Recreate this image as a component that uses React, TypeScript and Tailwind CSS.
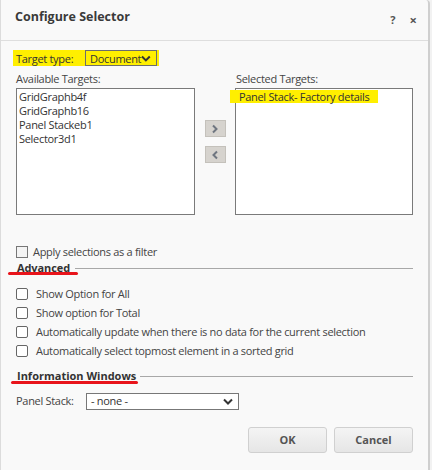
import React from "react";

const font = { fontFamily: '"Open Sans", "Noto Sans", sans-serif' };

function Chevron() {
  return (
    <svg width="10" height="7" viewBox="0 0 10 7">
      <path d="M1 1.5 L5 5.5 L9 1.5" fill="none" stroke="#333" strokeWidth="2" />
    </svg>
  );
}

function Check({ rounded }: { rounded?: boolean }) {
  return (
    <span
      className={
        rounded
          ? "block w-[12px] h-[12px] border border-[#666] rounded-[2px] bg-white shrink-0"
          : "block w-[12px] h-[12px] border border-[#777] bg-[#f4f4f4] shrink-0"
      }
    />
  );
}

export default function App() {
  const options = [
    "Show Option for All",
    "Show option for Total",
    "Automatically update when there is no data for the current selection",
    "Automatically select topmost element in a sorted grid",
  ];
  return (
    <div className="w-[432px] h-[470px] bg-[#f2f2f2] overflow-hidden" style={font}>
      <div className="w-[430px] h-[470px] bg-[#f9f9f9] border-l border-l-[#dcdcdc] border-r-2 border-r-[#cfcfcf] rounded-tr-[4px] text-[11px] tracking-[-0.3px] text-[#333]">
        {/* header */}
        <div className="h-[41px] border-b border-[#dedede] flex items-start justify-between pl-[14px] pr-[11px] tracking-normal">
          <div className="mt-[8px] text-[12.5px] font-bold text-[#3a3a3a]">Configure Selector</div>
          <div className="flex items-center gap-[14px] mt-[12px] text-[#555] font-bold">
            <span className="text-[11px]">?</span>
            <span className="text-[13px] leading-none">×</span>
          </div>
        </div>
        <div className="px-[15px]">
          {/* target type */}
          <div className="mt-[9px] h-[16px] flex">
            <div className="ml-[-3px] w-[146px] h-[16px] flex items-center bg-[#ffef00]">
              <span className="ml-[3px] w-[69px] leading-none">Target type:</span>
              <div className="w-[72px] h-[16px] border border-[#6d6d6d] flex items-center pl-[4px] pr-[5px] justify-between">
                <span className="leading-none">Document</span>
                <Chevron />
              </div>
            </div>
          </div>
          {/* labels */}
          <div className="mt-[6px] h-[14px] flex leading-[14px] text-[#444]">
            <span className="w-[220px]">Available Targets:</span>
            <span>Selected Targets:</span>
          </div>
          {/* lists */}
          <div className="mt-[2px] flex">
            <div className="w-[180px] h-[127px] border border-[#7a7a7a] bg-white pl-[2px] pt-[1px] leading-[14px]">
              <div>GridGraphb4f</div>
              <div>GridGraphb16</div>
              <div>Panel Stackeb1</div>
              <div>Selector3d1</div>
            </div>
            <div className="w-[40px] flex flex-col items-center pt-[32px] gap-[9px]">
              <div className="w-[21px] h-[17px] bg-[#d6d3ce] border border-[#c4c1bb] flex items-center justify-center">
                <svg width="8" height="10" viewBox="0 0 8 10"><path d="M2 1.5 L5.5 5 L2 8.5" fill="none" stroke="#6f7680" strokeWidth="2" /></svg>
              </div>
              <div className="w-[21px] h-[17px] bg-[#d6d3ce] border border-[#c4c1bb] flex items-center justify-center">
                <svg width="8" height="10" viewBox="0 0 8 10"><path d="M6 1.5 L2.5 5 L6 8.5" fill="none" stroke="#6f7680" strokeWidth="2" /></svg>
              </div>
            </div>
            <div className="w-[179px] h-[127px] border border-[#7a7a7a] bg-white pt-[1px] leading-[14px]">
              <div className="ml-[-6px] w-[148px] h-[13px] bg-[#ffef00] pl-[9px] leading-[13px]">Panel Stack- Factory details</div>
            </div>
          </div>
          {/* apply filter */}
          <div className="mt-[31px] h-[12px] flex items-center gap-[5px]">
            <Check />
            <span className="text-[#444]">Apply selections as a filter</span>
          </div>
          {/* advanced */}
          <div className="mt-[3px] h-[14px] flex items-center relative">
            <span className="font-bold text-[#333] ml-[1px] tracking-[-0.1px]">Advanced</span>
            <div className="flex-1 h-px bg-[#a8a8a8] ml-[5px]" />
            <div className="absolute left-[-8px] top-[11px] w-[70px] h-[3px] rounded-full bg-[#e8141b]" />
          </div>
          {/* options */}
          <div className="mt-[13px] flex flex-col gap-[7px]">
            {options.map((o) => (
              <div key={o} className="h-[12px] flex items-center gap-[8px]">
                <Check rounded />
                <span className="text-[#444]">{o}</span>
              </div>
            ))}
          </div>
          {/* information windows */}
          <div className="mt-[12px] h-[14px] flex items-center relative">
            <span className="font-bold text-[#333] ml-[1px] tracking-[0px]">Information Windows</span>
            <div className="flex-1 h-px bg-[#a8a8a8] ml-[4px]" />
            <div className="absolute left-[-5px] top-[12px] w-[127px] h-[3px] rounded-full bg-[#e8141b]" />
          </div>
          {/* panel stack */}
          <div className="mt-[10px] h-[17px] flex items-center">
            <span className="w-[70px] text-[#444]">Panel Stack:</span>
            <div className="w-[153px] h-[17px] border border-[#777] bg-white flex items-center justify-between pl-[4px] pr-[5px]">
              <span>- none -</span>
              <Chevron />
            </div>
          </div>
          {/* buttons */}
          <div className="mt-[17px] flex justify-end gap-[7px] tracking-normal">
            <button className="w-[79px] h-[26px] rounded-[3px] border border-[#d0d0d0] bg-gradient-to-b from-[#f4f4f4] to-[#e6e6e6] font-bold text-[#555] text-[11px]">OK</button>
            <button className="w-[79px] h-[26px] rounded-[3px] border border-[#d0d0d0] bg-gradient-to-b from-[#f4f4f4] to-[#e6e6e6] font-bold text-[#555] text-[11px]">Cancel</button>
          </div>
        </div>
      </div>
    </div>
  );
}
